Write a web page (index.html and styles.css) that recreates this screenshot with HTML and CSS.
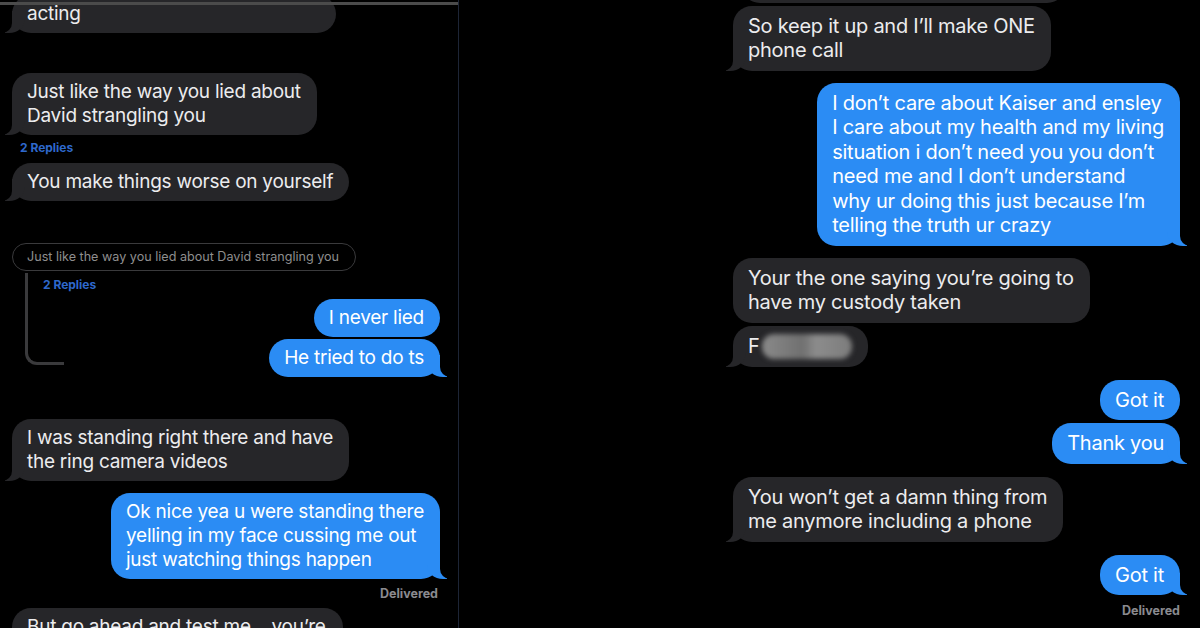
FILE: index.html
```html
<!DOCTYPE html>
<html lang="en">
<head>
    <meta charset="UTF-8">
    <meta name="viewport" content="width=device-width, initial-scale=1.0">
    <title>Messages</title>
    <link rel="stylesheet" href="styles.css">
</head>
<body>

<div class="page">

    <!-- Left screenshot -->
    <div class="panel panel-left">
        <div class="crop-bar"></div>

        <div class="msg them tail first-cut">acting</div>

        <div class="msg them tail mt-40">Just like the way you lied about<br>David strangling you</div>
        <div class="replies">2 Replies</div>
        <div class="msg them tail mt-8">You make things worse on yourself</div>

        <div class="quote">Just like the way you lied about David strangling you</div>

        <div class="thread">
            <div class="replies replies-thread">2 Replies</div>
            <div class="msg me mt-7">I never lied</div>
            <div class="msg me tail mt-2">He tried to do ts</div>
        </div>

        <div class="msg them tail mt-42">I was standing right there and have<br>the ring camera videos</div>
        <div class="msg me tail mt-12">Ok nice yea u were standing there<br>yelling in my face cussing me out<br>just watching things happen</div>
        <div class="status">Delivered</div>

        <div class="msg them mt-7 last-cut">But go ahead and test me... you&rsquo;re</div>
    </div>

    <!-- Right screenshot -->
    <div class="panel panel-right">
        <div class="msg them top-cut">&nbsp;</div>
        <div class="msg them tail mt-3">So keep it up and I&rsquo;ll make ONE<br>phone call</div>

        <div class="msg me tail mt-12">I don&rsquo;t care about Kaiser and ensley<br>I care about my health and my living<br>situation i don&rsquo;t need you you don&rsquo;t<br>need me and I don&rsquo;t understand<br>why ur doing this just because I&rsquo;m<br>telling the truth ur crazy</div>

        <div class="msg them mt-12">Your the one saying you&rsquo;re going to<br>have my custody taken</div>
        <div class="msg them tail mt-3">F<span class="blurred"></span></div>

        <div class="msg me mt-13">Got it</div>
        <div class="msg me tail mt-3">Thank you</div>

        <div class="msg them tail mt-13">You won&rsquo;t get a damn thing from<br>me anymore including a phone</div>

        <div class="msg me tail mt-13">Got it</div>
        <div class="status">Delivered</div>
    </div>

</div>

</body>
</html>
```

FILE: styles.css
```css
/* Page */
html, body {
    margin: 0;
    height: 100%;
    background-color: #000;
}
body {
    font-family: "Inter", "Liberation Sans", sans-serif;
    overflow: hidden;
}
.page {
    display: flex;
    height: 628px;
    overflow: hidden;
}

/* Panels (two screenshots side by side) */
.panel {
    display: flex;
    flex-direction: column;
    overflow: hidden;
    position: relative;
}
.panel-left {
    width: 428px;
    padding: 0 18px 0 12px;
    border-right: 1px solid #1d2536;
    font-size: 19px;
    --lh: 24px;
    --pad: 7px;
}
.panel-right {
    width: 447px;
    margin-left: auto;
    padding: 0 20px 0 18px;
    font-size: 20px;
    --lh: 24.5px;
    --pad: 8px;
}

/* Gray line along the top edge of the left screenshot */
.crop-bar {
    position: absolute;
    top: 2px;
    left: 0;
    right: 0;
    height: 3px;
    background-color: #4b4b4b;
    z-index: 3;
}

/* Bubbles */
.msg {
    position: relative;
    max-width: max-content;
    padding: var(--pad) 16px var(--pad) 15px;
    border-radius: 19px;
    line-height: var(--lh);
    letter-spacing: -0.25px;
    white-space: nowrap;
}
.msg.them {
    align-self: flex-start;
    background-color: #262629;
    color: #ececee;
}
.msg.me {
    align-self: flex-end;
    background-color: #2b8cf4;
    color: #fff;
}

/* Bubble tails */
.msg.tail::before,
.msg.tail::after {
    content: "";
    position: absolute;
    bottom: 0;
    height: 22px;
}
.msg.them.tail::before {
    left: -7px;
    width: 20px;
    background-color: #262629;
    border-bottom-right-radius: 16px 14px;
}
.msg.them.tail::after {
    left: -26px;
    width: 26px;
    background-color: #000;
    border-bottom-right-radius: 10px;
}
.msg.me.tail::before {
    right: -7px;
    width: 20px;
    background-color: #2b8cf4;
    border-bottom-left-radius: 16px 14px;
}
.msg.me.tail::after {
    right: -26px;
    width: 26px;
    background-color: #000;
    border-bottom-left-radius: 10px;
}

/* Bubbles cut off by the screenshot edges */
.first-cut {
    margin-top: -5px;
    width: 293px;
    max-width: none;
}
.last-cut {
    width: 300px;
    max-width: none;
}
.top-cut {
    margin-top: -38px;
    width: 294px;
    max-width: none;
    margin-left: 8px;
}

/* Blurred name */
.blurred {
    display: inline-block;
    width: 90px;
    height: 25px;
    margin-left: 2px;
    vertical-align: -6px;
    border-radius: 12px;
    background: linear-gradient(90deg, #8a8a8a 0%, #707070 45%, #8c8c8c 60%, #7c7c7c 100%);
    filter: blur(2.5px);
}

/* Reply labels */
.replies {
    margin-top: 6px;
    padding-left: 8px;
    font-size: 12px;
    line-height: 14px;
    font-weight: 700;
    color: #2e68cc;
}

/* Quoted message of the reply thread */
.quote {
    align-self: flex-start;
    margin-top: 42px;
    padding: 5px 16px 5px 14px;
    border: 1px solid #3a3a3c;
    border-radius: 14px;
    font-size: 12.6px;
    line-height: 16px;
    color: #8e8e8e;
    white-space: nowrap;
}

/* Reply thread with its connector line */
.thread {
    position: relative;
    display: flex;
    flex-direction: column;
}
.thread::before {
    content: "";
    position: absolute;
    top: 2px;
    left: 13px;
    width: 36px;
    height: 89px;
    border-left: 3px solid #3a3a3c;
    border-bottom: 3px solid #3a3a3c;
    border-bottom-left-radius: 12px;
}
.replies-thread {
    margin-top: 7px;
    padding-left: 31px;
}

/* Delivered status */
.status {
    align-self: flex-end;
    margin-top: 8px;
    font-size: 12.5px;
    line-height: 14px;
    font-weight: 700;
    color: #8a8a8f;
}
.panel-left .status {
    margin-right: 2px;
}
.panel-right .status {
    margin-top: 9px;
}

/* Spacing helpers */
.mt-2 { margin-top: 2px; }
.mt-3 { margin-top: 3px; }
.mt-7 { margin-top: 7px; }
.mt-8 { margin-top: 8px; }
.mt-12 { margin-top: 12px; }
.mt-13 { margin-top: 13px; }
.mt-40 { margin-top: 40px; }
.mt-42 { margin-top: 42px; }
```
